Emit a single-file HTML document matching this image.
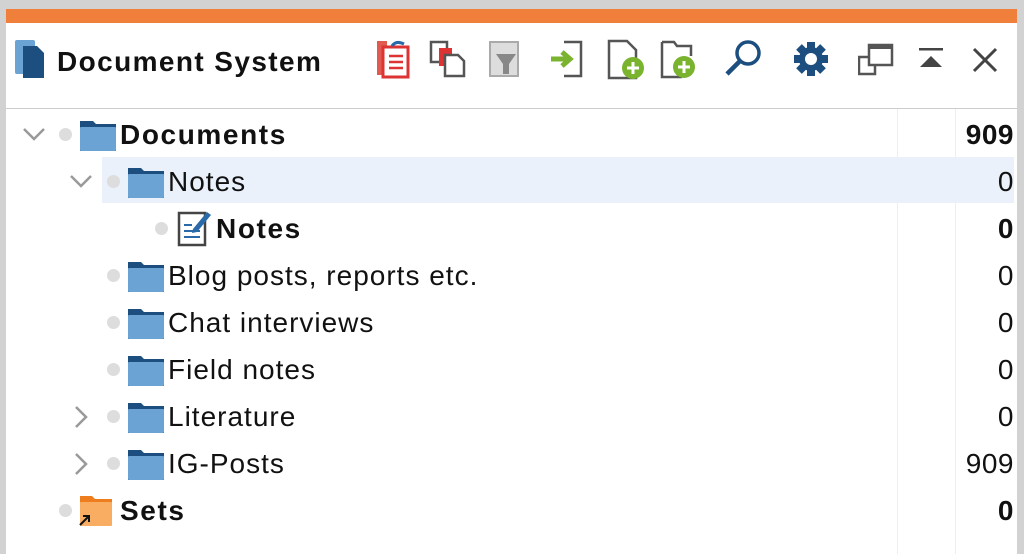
<!DOCTYPE html>
<html><head><meta charset="utf-8"><style>
body{margin:0;width:1024px;height:554px;background:#d2d2d2;position:relative;overflow:hidden;font-family:"Liberation Sans",sans-serif;}
#panel{position:absolute;left:6px;top:9px;width:1011px;height:545px;background:#fff;}
#orange{position:absolute;left:6px;top:9px;width:1011px;height:14px;background:#f07f3c;}
.a{position:absolute;}
.t{position:absolute;font-size:28px;color:#111;line-height:30px;white-space:nowrap;letter-spacing:1px;}
.b{font-weight:bold;letter-spacing:1.6px;}
.n{position:absolute;right:10px;font-size:28px;line-height:30px;color:#111;letter-spacing:0.5px;}
.dot{position:absolute;width:13px;height:13px;border-radius:50%;background:#ddd;}
</style></head><body>
<div id="panel"></div><div id="orange"></div>
<svg class="a" style="left:14px;top:38px" width="36" height="42"><rect x="1" y="2" width="20" height="34" rx="2" fill="#6aa3d4"/><path d="M9 8h14l7 7v25h-21z" fill="#1c4f80"/></svg>
<div class="t b" style="left:57px;top:47px;font-size:28px;letter-spacing:1.4px">Document System</div>
<div class="a" style="left:6px;top:108px;width:1011px;height:1px;background:#ccc"></div>
<div class="a" style="left:897px;top:109px;width:1px;height:445px;background:#eee"></div>
<div class="a" style="left:955px;top:109px;width:1px;height:445px;background:#eee"></div>
<svg class="a" style="left:376px;top:38px" width="36" height="42"><rect x="1" y="3" width="10" height="34" fill="#e05a50"/><rect x="7" y="9" width="25" height="30" fill="#fff" stroke="#d33" stroke-width="3"/><path d="M13 18h14M13 24h14M13 30h14" stroke="#d33" stroke-width="2.5"/><path d="M16 8q4-6 12-2" stroke="#2a6aa8" stroke-width="3" fill="none"/></svg>
<svg class="a" style="left:429px;top:38px" width="40" height="42"><rect x="2" y="4" width="16" height="20" fill="none" stroke="#555" stroke-width="2.5"/><rect x="10" y="10" width="13" height="18" fill="#d33"/><path d="M16 17h13l6 6v15h-19z" fill="#fff" stroke="#555" stroke-width="2.5"/></svg>
<svg class="a" style="left:488px;top:38px" width="36" height="42"><rect x="2" y="4" width="28" height="34" fill="#ddd" stroke="#aaa" stroke-width="2"/><path d="M8 16h20l-7 10v10h-6v-10z" fill="#888"/></svg>
<svg class="a" style="left:550px;top:40px" width="36" height="38"><path d="M14 2h17v34h-17" fill="none" stroke="#555" stroke-width="2.5"/><path d="M1 19h15M12 12l8 7-8 7" stroke="#7ab32e" stroke-width="5" fill="none"/></svg>
<svg class="a" style="left:607px;top:39px" width="40" height="42"><path d="M2 2h18l9 9v28h-27z" fill="none" stroke="#555" stroke-width="2.5"/><circle cx="26" cy="29" r="11" fill="#7ab32e"/><path d="M26 23v12M20 29h12" stroke="#fff" stroke-width="3"/></svg>
<svg class="a" style="left:660px;top:40px" width="40" height="40"><path d="M2 2h12l3 4h14v10M2 2v35h20" fill="none" stroke="#555" stroke-width="2.5"/><circle cx="24" cy="27" r="11" fill="#7ab32e"/><path d="M24 21v12M18 27h12" stroke="#fff" stroke-width="3"/></svg>
<svg class="a" style="left:724px;top:38px" width="40" height="40"><circle cx="24" cy="15" r="11" fill="none" stroke="#1c4f80" stroke-width="3.5"/><path d="M16 23l-13 13" stroke="#1c4f80" stroke-width="4.5"/></svg>
<svg class="a" style="left:793px;top:41px" width="36" height="36" viewBox="-18 -18 36 36"><g fill="#1c4f80"><circle r="12"/><g id="g"><rect x="-4" y="-17" width="8" height="34"/></g><use href="#g" transform="rotate(45)"/><use href="#g" transform="rotate(90)"/><use href="#g" transform="rotate(135)"/></g><circle r="6" fill="#fff"/></svg>
<svg class="a" style="left:858px;top:43px" width="38" height="34"><rect x="1" y="14" width="16" height="17" fill="none" stroke="#555" stroke-width="2.5"/><rect x="11" y="2" width="23" height="20" fill="#fff" stroke="#555" stroke-width="2.5"/><rect x="11" y="2" width="23" height="4" fill="#555"/></svg>
<svg class="a" style="left:917px;top:46px" width="28" height="26"><rect x="2" y="2" width="24" height="2.5" fill="#444"/><path d="M3 21l11-11 11 11z" fill="#444"/></svg>
<svg class="a" style="left:970px;top:45px" width="30" height="30"><path d="M4 4l22 22M26 4l-22 22" stroke="#444" stroke-width="3"/></svg>
<div class="a" style="left:102px;top:157px;width:912px;height:46px;background:#eaf1fa"></div>
<svg width="0" height="0" style="position:absolute"><defs>
<symbol id="f" viewBox="0 0 36 32"><path d="M0 2h13l3 3h20v27h-36z" fill="#1c4f80"/><rect x="0" y="8" width="36" height="24" rx="1" fill="#6aa3d4"/></symbol>
</defs></svg>
<svg class="a" style="left:22px;top:126px" width="24" height="16"><path d="M2 3l10 10 10-10" stroke="#999" stroke-width="2.5" fill="none"/></svg>
<div class="dot" style="left:59px;top:128px"></div>
<svg class="a" style="left:80px;top:119px" width="36" height="32"><use href="#f"/></svg>
<div class="t b" style="left:120px;top:120px">Documents</div><div class="n b" style="top:120px">909</div>

<svg class="a" style="left:69px;top:173px" width="24" height="16"><path d="M2 3l10 10 10-10" stroke="#999" stroke-width="2.5" fill="none"/></svg>
<div class="dot" style="left:107px;top:175px"></div>
<svg class="a" style="left:128px;top:166px" width="36" height="32"><use href="#f"/></svg>
<div class="t" style="left:168px;top:167px">Notes</div><div class="n" style="top:167px">0</div>

<div class="dot" style="left:155px;top:222px"></div>
<svg class="a" style="left:177px;top:206px" width="36" height="42"><path d="M2 7h26v32h-26z" fill="#fff" stroke="#444" stroke-width="2.5"/><path d="M7 19h8M7 25h16M7 31h16" stroke="#2a6aa8" stroke-width="2"/><path d="M16 23l14-17 4 3-14 17-5 1z" fill="#2a6aa8"/></svg>
<div class="t b" style="left:216px;top:214px">Notes</div><div class="n b" style="top:214px">0</div>

<div class="dot" style="left:107px;top:269px"></div>
<svg class="a" style="left:128px;top:260px" width="36" height="32"><use href="#f"/></svg>
<div class="t" style="left:168px;top:261px">Blog posts, reports etc.</div><div class="n" style="top:261px">0</div>

<div class="dot" style="left:107px;top:316px"></div>
<svg class="a" style="left:128px;top:307px" width="36" height="32"><use href="#f"/></svg>
<div class="t" style="left:168px;top:308px">Chat interviews</div><div class="n" style="top:308px">0</div>

<div class="dot" style="left:107px;top:363px"></div>
<svg class="a" style="left:128px;top:354px" width="36" height="32"><use href="#f"/></svg>
<div class="t" style="left:168px;top:355px">Field notes</div><div class="n" style="top:355px">0</div>

<svg class="a" style="left:73px;top:405px" width="16" height="24"><path d="M3 2l10 10-10 10" stroke="#999" stroke-width="2.5" fill="none"/></svg>
<div class="dot" style="left:107px;top:410px"></div>
<svg class="a" style="left:128px;top:401px" width="36" height="32"><use href="#f"/></svg>
<div class="t" style="left:168px;top:402px">Literature</div><div class="n" style="top:402px">0</div>

<svg class="a" style="left:73px;top:452px" width="16" height="24"><path d="M3 2l10 10-10 10" stroke="#999" stroke-width="2.5" fill="none"/></svg>
<div class="dot" style="left:107px;top:457px"></div>
<svg class="a" style="left:128px;top:448px" width="36" height="32"><use href="#f"/></svg>
<div class="t" style="left:168px;top:449px">IG-Posts</div><div class="n" style="top:449px">909</div>

<div class="dot" style="left:59px;top:504px"></div>
<svg class="a" style="left:78px;top:494px" width="36" height="34"><path d="M2 2h12l3 3h17v6h-32z" fill="#ee7d1e"/><rect x="2" y="8" width="32" height="24" rx="1" fill="#f9ad63"/><path d="M2 31l9-9M5 22h6v6" stroke="#111" stroke-width="2" fill="none"/></svg>
<div class="t b" style="left:120px;top:496px">Sets</div><div class="n b" style="top:496px">0</div>
</body></html>
